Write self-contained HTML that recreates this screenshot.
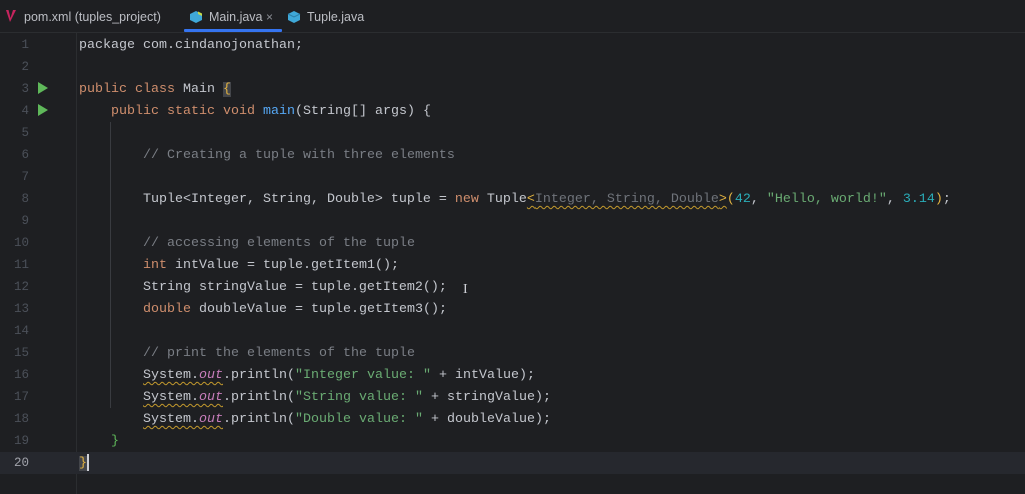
<!DOCTYPE html>
<html><head><meta charset="utf-8"><style>
*{margin:0;padding:0;box-sizing:border-box}
body{width:1025px;height:494px;background:#1e1f22;overflow:hidden;font-family:"Liberation Sans",sans-serif;position:relative}
.tabs{position:absolute;left:0;top:0;width:1025px;height:33px;border-bottom:1px solid #2b2d30;background:#1e1f22}
.tab{position:absolute;top:10px;font-size:12.5px;color:#bcbec4;white-space:nowrap}
.ul{position:absolute;left:184px;top:29px;width:98px;height:3px;background:#3574f0;border-radius:1px}
.gutsep{position:absolute;left:76px;top:33px;width:1px;height:461px;background:#2b2d30}
.cur{position:absolute;left:0;top:452px;width:1025px;height:22px;background:#26282e}
.ln{position:absolute;left:0;width:29px;text-align:right;font-family:"Liberation Mono",monospace;font-size:12.5px;color:#4b5059}
.code{position:absolute;left:79px;font-family:"Liberation Mono",monospace;font-size:13.33px;color:#c4c7ce;white-space:pre;line-height:22px}
.k{color:#cf8e6d}.c{color:#7a7e85}.n{color:#2aacb8}.s{color:#6aab73}.m{color:#56a8f5}.o{color:#c77dbb;font-style:italic}.g{color:#6f737a}
.w{text-decoration:underline wavy #c39a2d;text-decoration-thickness:1px;text-underline-offset:3px}
.guide{position:absolute;left:110px;width:1px;background:#393b40}
.run{position:absolute;left:38px;width:0;height:0;border-left:10px solid #5fb85a;border-top:6px solid transparent;border-bottom:6px solid transparent}
</style></head><body>
<div class="tabs">
<svg style="position:absolute;left:5px;top:9px" width="12" height="14" viewBox="0 0 12 14"><path d="M1 1 L5 13 L11 1 L8 1 L5.5 9 L3.5 1Z" fill="#c6245e"/></svg>
<div class="tab" style="left:24px">pom.xml (tuples_project)</div>
<svg style="position:absolute;left:189px;top:10px" width="14" height="14" viewBox="0 0 14 14"><path d="M7 1 L13 4 L13 10 L7 13 L1 10 L1 4Z" fill="#3fa8d8"/><path d="M9 1.5 L13 3.5 L13 6 L9 4Z" fill="#c3d84a"/></svg>
<div class="tab" style="left:209px">Main.java <span style="color:#8c8f96;font-size:12px">×</span></div>
<svg style="position:absolute;left:287px;top:10px" width="14" height="14" viewBox="0 0 14 14"><path d="M7 1 L13 4 L13 10 L7 13 L1 10 L1 4Z" fill="#3fa8d8"/><path d="M1 4 L7 7 L13 4" stroke="#2b7fa8" fill="none"/></svg>
<div class="tab" style="left:307px">Tuple.java</div>
<div class="ul"></div>
</div>
<div class="gutsep"></div>
<div class="cur"></div>
<div class="guide" style="top:122px;height:286px"></div>
<div class="run" style="top:82px"></div>
<div class="run" style="top:104px"></div>
<div id="lns"></div>
<div class="code" style="top:35px">package com.cindanojonathan;

<span class="k">public class</span> Main <span style="color:#e3b341;background:#43454a">{</span>
    <span class="k">public static void</span> <span class="m">main</span>(String[] args) {

        <span class="c">// Creating a tuple with three elements</span>

        Tuple&lt;Integer, String, Double&gt; tuple = <span class="k">new</span> Tuple<span class="w"><span style="color:#e3b341">&lt;</span><span class="g">Integer, String, Double</span><span style="color:#e3b341">&gt;</span></span><span style="color:#e3b341">(</span><span class="n">42</span>, <span class="s">"Hello, world!"</span>, <span class="n">3.14</span><span style="color:#e3b341">)</span>;

        <span class="c">// accessing elements of the tuple</span>
        <span class="k">int</span> intValue = tuple.getItem1();
        String stringValue = tuple.getItem2();
        <span class="k">double</span> doubleValue = tuple.getItem3();

        <span class="c">// print the elements of the tuple</span>
        <span class="w">System.<span class="o">out</span></span>.println(<span class="s">"Integer value: "</span> + intValue);
        <span class="w">System.<span class="o">out</span></span>.println(<span class="s">"String value: "</span> + stringValue);
        <span class="w">System.<span class="o">out</span></span>.println(<span class="s">"Double value: "</span> + doubleValue);
    <span style="color:#5fb85a">}</span>
<span style="color:#e3b341;background:#43454a">}</span><span style="display:inline-block;width:2px;height:17px;background:#ced0d6;vertical-align:middle"></span></div>
<div style="position:absolute;left:463px;top:282px;color:#ced0d6;font-size:14px;font-family:'Liberation Serif',serif">I</div>
<script>
var h='';for(var i=1;i<=20;i++){h+='<div class="ln" style="top:'+(38+22*(i-1))+'px;'+(i==20?'color:#a1a3ab':'')+'">'+i+'</div>';}
document.getElementById('lns').innerHTML=h;
</script>
</body></html>
